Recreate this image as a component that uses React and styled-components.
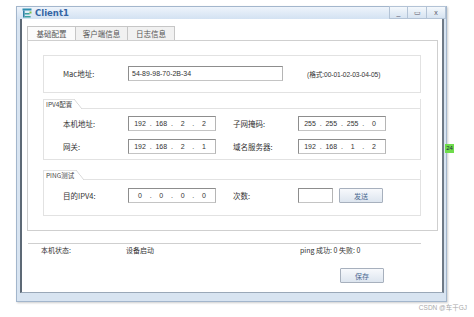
import React from "react";
import styled, { createGlobalStyle } from "styled-components";

const GlobalStyle = createGlobalStyle`
  html, body {
    margin: 0;
    padding: 0;
    background: #fff;
  }
  body {
    font-family: "Liberation Sans", "Noto Sans CJK SC", sans-serif;
    font-size: 8px;
    color: #333;
  }
`;

const Page = styled.div`
  position: relative;
  width: 474px;
  height: 317px;
  padding: 6px 0 0 16px;
  box-sizing: border-box;
`;

const Window = styled.div`
  width: 431px;
  height: 296px;
  box-sizing: border-box;
  border: 1px solid #a3b6cc;
  background: #d8e4f1;
  display: flex;
  flex-direction: column;
  box-shadow: 1px 1px 2px rgba(0, 0, 0, 0.2);
`;

const TitleBar = styled.div`
  height: 12px;
  display: flex;
  align-items: center;
  padding-left: 5px;
  background: linear-gradient(#eef4fb, #d3e2f2);
`;

const Title = styled.span`
  margin-left: 3px;
  font-family: "DejaVu Sans", "Liberation Sans", sans-serif;
  font-weight: bold;
  font-size: 8.5px;
  color: #3465a4;
`;

const WinButtons = styled.div`
  margin-left: auto;
  display: flex;
  align-self: flex-start;
  margin-top: -1px;
`;

const WinButton = styled.div`
  width: 19px;
  height: 13px;
  box-sizing: border-box;
  border: 1px solid #b3c3d6;
  border-left: none;
  background: linear-gradient(#f4f8fc, #d6e3f1);
  display: flex;
  align-items: center;
  justify-content: center;
  color: #556;
  font-size: 7px;
  line-height: 1;
  &:first-child {
    border-left: 1px solid #b3c3d6;
  }
`;

const Body = styled.div`
  flex: 1;
  margin: 0 2px 8px 3px;
  border-left: 2px solid #5d6976;
  border-right: 2px solid #6f7a86;
  border-bottom: 1px solid #9aa8b8;
  background: #fff;
  display: flex;
  flex-direction: column;
  padding-top: 7px;
`;

const Tabs = styled.div`
  display: flex;
  margin-left: 5px;
`;

const Tab = styled.div`
  width: ${(p) => p.$w}px;
  height: 14px;
  box-sizing: border-box;
  border: 1px solid #c6c6c6;
  border-bottom: none;
  margin-right: -1px;
  background: ${(p) => (p.$active ? "#fbfbfb" : "#f1f1f1")};
  color: #555;
  display: flex;
  align-items: center;
  justify-content: center;
  font-family: "Noto Sans CJK SC", sans-serif;
  font-size: 7.5px;
`;

const Panel = styled.div`
  margin-left: 5px;
  width: 411px;
  height: 191px;
  box-sizing: border-box;
  border: 1px solid #cfcfcf;
  padding: 14px 16px 0 15px;
`;

const Box = styled.div`
  width: 378px;
  box-sizing: border-box;
  border: 1px solid #e2e2e2;
  ${(p) => (p.$tabbed ? "border-top: none;" : "")}
  margin-top: ${(p) => p.$top || 0}px;
  padding: ${(p) => p.$pad};
`;

const GroupHead = styled.div`
  display: flex;
  height: 10px;
  margin-right: -1px;
  background: #fff;
`;

const GroupLabel = styled.div`
  border-top: 1px solid #e2e2e2;
  padding: 0 2px;
  font-family: "Noto Sans CJK SC", sans-serif;
  font-size: 6.5px;
  line-height: 9px;
  color: #444;
`;

const Slant = styled.div`
  width: 8px;
  background: linear-gradient(
    to top right,
    transparent calc(50% - 0.7px),
    #d6d6d6 50%,
    transparent calc(50% + 0.7px)
  );
`;

const Fill = styled.div`
  flex: 1;
  border-bottom: 1px solid #e2e2e2;
  border-right: 1px solid #e2e2e2;
`;

const Row = styled.div`
  display: flex;
  align-items: center;
  height: 15px;
  padding-left: 19px;
  margin-top: ${(p) => p.$top || 0}px;
`;

const Label = styled.span`
  width: ${(p) => p.$w}px;
  margin-left: ${(p) => p.$ml || 0}px;
  flex-shrink: 0;
  white-space: nowrap;
  font-family: "Noto Sans CJK SC", sans-serif;
  font-size: 7.5px;
  color: #333;
`;

const Input = styled.div`
  width: ${(p) => p.$w}px;
  height: 15px;
  box-sizing: border-box;
  border: 1px solid #8d8d8d;
  border-right-color: #b5b5b5;
  border-bottom-color: #c4c4c4;
  background: #fff;
  display: flex;
  align-items: center;
  padding-left: 3px;
  font-family: "Liberation Sans", sans-serif;
  font-size: 7px;
  color: #333;
  flex-shrink: 0;
  margin-right: ${(p) => p.$mr || 0}px;
`;

const IpBox = styled(Input)`
  padding: 0 4px;
  justify-content: space-between;
`;

const Seg = styled.span`
  width: 14px;
  text-align: center;
`;

const Dot = styled.span`
  width: 4px;
  text-align: center;
`;

const Hint = styled.span`
  white-space: nowrap;
  font-family: "Liberation Sans", "Noto Sans CJK SC", sans-serif;
  font-size: 6.7px;
  letter-spacing: -0.1px;
  color: #333;
`;

const Button = styled.div`
  width: 44px;
  height: 15px;
  box-sizing: border-box;
  border: 1px solid #a7b0bd;
  border-radius: 1px;
  background: linear-gradient(#f7f9fc, #dde5ef);
  display: flex;
  align-items: center;
  justify-content: center;
  font-family: "Noto Sans CJK SC", sans-serif;
  font-size: 7px;
  color: #4a6890;
  margin-left: ${(p) => p.$ml || 0}px;
`;

const Separator = styled.div`
  margin: 12px 0 0 6px;
  width: 393px;
  border-top: 1px solid #cfcfcf;
`;

const StatusRow = styled.div`
  display: flex;
  align-items: center;
  height: 10px;
  margin-top: 1px;
  padding-left: 19px;
  font-family: "Noto Sans CJK SC", sans-serif;
  font-size: 7px;
  color: #333;
`;

const StatusCell = styled.span`
  width: ${(p) => p.$w}px;
  flex-shrink: 0;
  white-space: nowrap;
`;

const SaveRow = styled.div`
  display: flex;
  margin-top: 13px;
  padding-left: 318px;
`;

const Badge = styled.div`
  position: absolute;
  left: 445px;
  top: 144px;
  width: 9px;
  height: 9px;
  background: #6fdc4c;
  font-family: "Liberation Sans", sans-serif;
  font-size: 6px;
  line-height: 9px;
  text-align: center;
  color: #224;
`;

const Watermark = styled.div`
  position: absolute;
  right: 7px;
  bottom: 5px;
  font-family: "Liberation Sans", "Noto Sans CJK SC", sans-serif;
  font-size: 6.5px;
  color: #a9a9a9;
`;

const AppIcon = () => (
  <svg width="10" height="10" viewBox="0 0 10 10">
    <rect x="0.5" y="0.5" width="9" height="2" fill="#2f8fb0" />
    <rect x="1" y="2.5" width="1.6" height="7" fill="#2f7fa8" />
    <rect x="2.6" y="5" width="5" height="1.5" fill="#3aa0a0" />
    <rect x="2.6" y="8" width="6" height="1.5" fill="#3aa0a0" />
    <rect x="7.5" y="3.5" width="2" height="2" fill="#7cc04a" />
  </svg>
);

const Ip = ({ w = 88, parts }) => (
  <IpBox $w={w}>
    <Seg>{parts[0]}</Seg>
    <Dot>.</Dot>
    <Seg>{parts[1]}</Seg>
    <Dot>.</Dot>
    <Seg>{parts[2]}</Seg>
    <Dot>.</Dot>
    <Seg>{parts[3]}</Seg>
  </IpBox>
);

const Group = ({ title, top, pad, children }) => (
  <Box $tabbed $top={top} $pad={pad}>
    <GroupHead>
      <GroupLabel>{title}</GroupLabel>
      <Slant />
      <Fill />
    </GroupHead>
    {children}
  </Box>
);

export default function App() {
  return (
    <Page>
      <GlobalStyle />
      <Window>
        <TitleBar>
          <AppIcon />
          <Title>Client1</Title>
          <WinButtons>
            <WinButton>_</WinButton>
            <WinButton>▭</WinButton>
            <WinButton>x</WinButton>
          </WinButtons>
        </TitleBar>
        <Body>
          <Tabs>
            <Tab $w={49} $active>基础配置</Tab>
            <Tab $w={53}>客户端信息</Tab>
            <Tab $w={48}>日志信息</Tab>
          </Tabs>
          <Panel>
            <Box $pad="10px 0 11px 0">
              <Row>
                <Label $w={65}>Mac地址:</Label>
                <Input $w={155} $mr={24}>54-89-98-70-2B-34</Input>
                <Hint>(格式:00-01-02-03-04-05)</Hint>
              </Row>
            </Box>

            <Group title="IPV4配置" top={6} pad="0 0 5px 0">
              <Row $top={7}>
                <Label $w={65}>本机地址:</Label>
                <Ip parts={["192", "168", "2", "2"]} />
                <Label $w={65} $ml={17}>子网掩码:</Label>
                <Ip parts={["255", "255", "255", "0"]} />
              </Row>
              <Row $top={8}>
                <Label $w={65}>网关:</Label>
                <Ip parts={["192", "168", "2", "1"]} />
                <Label $w={65} $ml={17}>域名服务器:</Label>
                <Ip parts={["192", "168", "1", "2"]} />
              </Row>
            </Group>

            <Group title="PING测试" top={10} pad="0 0 12px 0">
              <Row $top={8}>
                <Label $w={65}>目的IPV4:</Label>
                <Ip parts={["0", "0", "0", "0"]} />
                <Label $w={65} $ml={17}>次数:</Label>
                <Input $w={35} />
                <Button $ml={6}>发送</Button>
              </Row>
            </Group>
          </Panel>

          <Separator />
          <StatusRow>
            <StatusCell $w={85}>本机状态:</StatusCell>
            <StatusCell $w={174}>设备启动</StatusCell>
            <StatusCell $w={90}>ping 成功: 0 失败: 0</StatusCell>
          </StatusRow>
          <SaveRow>
            <Button>保存</Button>
          </SaveRow>
        </Body>
      </Window>
      <Badge>24</Badge>
      <Watermark>CSDN @车干GJ</Watermark>
    </Page>
  );
}
